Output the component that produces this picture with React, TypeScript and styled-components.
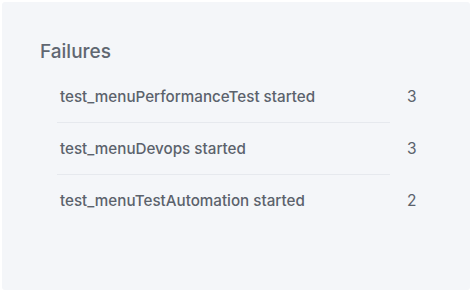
import React from "react";
import styled, { createGlobalStyle } from "styled-components";

const Global = createGlobalStyle`
  html, body { margin: 0; padding: 0; background: #ffffff; }
  body { width: 474px; height: 294px; overflow: hidden; }
`;

const Card = styled.section`
  box-sizing: border-box;
  margin: 2px 4px 4px 2px;
  height: 288px;
  background: #f4f6f9;
  border-radius: 3px;
  padding: 38px 0 0 38px;
  font-family: Inter, "Liberation Sans", sans-serif;
  color: #5b626c;
`;

const Title = styled.h2`
  margin: 0 0 7px 0;
  font-size: 19px;
  font-weight: 500;
  line-height: 24px;
  color: #606771;
`;

const List = styled.ul`
  list-style: none;
  margin: 0;
  padding: 0 0 0 17px;
  width: 333px;
`;

const Row = styled.li`
  display: flex;
  align-items: center;
  height: 51px;
  padding-left: 3px;
  font-size: 15.2px;
  font-weight: 500;
  & + & { border-top: 1px solid #e6e9ee; }
`;

const Name = styled.span`
  flex: 1;
`;

const Count = styled.span`
  width: 20px;
  margin-right: -37px;
  font-weight: 400;
  font-size: 15.5px;
`;

const items = [
  { name: "test_menuPerformanceTest started", count: 3 },
  { name: "test_menuDevops started", count: 3 },
  { name: "test_menuTestAutomation started", count: 2 },
];

export default function App() {
  return (
    <>
      <Global />
      <Card>
        <Title>Failures</Title>
        <List>
          {items.map((it) => (
            <Row key={it.name}>
              <Name>{it.name}</Name>
              <Count>{it.count}</Count>
            </Row>
          ))}
        </List>
      </Card>
    </>
  );
}
